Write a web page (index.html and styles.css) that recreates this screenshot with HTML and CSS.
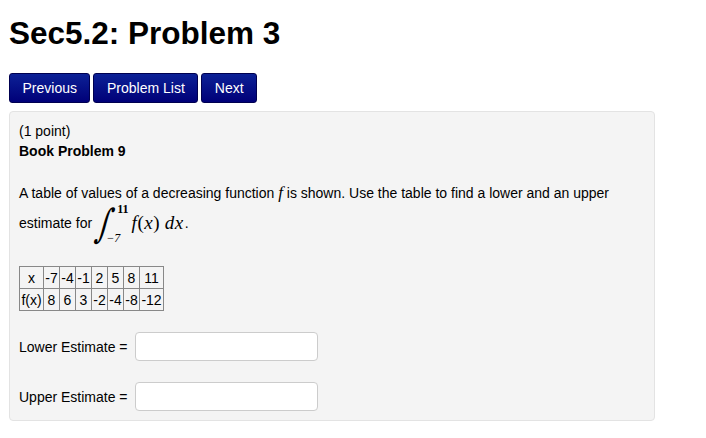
FILE: index.html
```
<!DOCTYPE html>
<html>
<head>
<title>Sec5.2: Problem 3</title>
<link rel="stylesheet" href="styles.css">
</head>
<body>
<div class="page">
    <h1 class="problem-title">Sec5.2: Problem 3</h1>

    <div class="nav-buttons">
        <button class="nav-button">Previous</button>
        <button class="nav-button">Problem List</button>
        <button class="nav-button">Next</button>
    </div>

    <div class="problem-box">
        <div class="points">(1 point)</div>
        <div class="book-problem">Book Problem 9</div>

        <div class="statement">
            A table of values of a decreasing function <span class="math-var">f</span> is shown. Use the table to find a lower and an upper
            <div class="estimate-line">
                <span>estimate for</span>
                <span class="integral">
                    <span class="int-sign">&int;</span>
                    <span class="int-limits">
                        <span class="int-upper">11</span>
                        <span class="int-lower">&minus;7</span>
                    </span>
                </span>
                <span class="math-expr"><i>f</i>(<i>x</i>)&thinsp;<i>dx</i></span><span class="math-dot">.</span>
            </div>
        </div>

        <table class="values-table">
            <tr>
                <td class="wide">x</td><td>-7</td><td>-4</td><td>-1</td><td>2</td><td>5</td><td>8</td><td class="wide">11</td>
            </tr>
            <tr>
                <td class="wide">f(x)</td><td>8</td><td>6</td><td>3</td><td>-2</td><td>-4</td><td>-8</td><td class="wide">-12</td>
            </tr>
        </table>

        <div class="answer-row">
            <label class="answer-label">Lower Estimate =</label>
            <input type="text" class="answer-input">
        </div>
        <div class="answer-row">
            <label class="answer-label">Upper Estimate =</label>
            <input type="text" class="answer-input">
        </div>
    </div>
</div>
</body>
</html>
```

FILE: styles.css
```
body {
    margin: 0;
    font-family: "Liberation Sans", Arial, sans-serif;
    font-size: 14px;
    color: #000;
    background: #fff;
}

.page {
    padding: 16px 0 0 9px;
}

.problem-title {
    margin: 0;
    font-size: 31.5px;
    line-height: 35px;
    font-weight: bold;
}

.nav-buttons {
    display: flex;
    gap: 3px;
    margin-top: 22px;
}

.nav-button {
    height: 30px;
    padding: 0 12.5px;
    border: 1px solid #000050;
    border-radius: 3px;
    background: linear-gradient(to bottom, #0c2196, #000078);
    color: #fff;
    font-family: "Liberation Sans", Arial, sans-serif;
    font-size: 14px;
    cursor: pointer;
}

.problem-box {
    width: 626px;
    margin-top: 8px;
    padding: 9px;
    background: #f4f4f4;
    border: 1px solid #e3e3e3;
    border-radius: 4px;
    line-height: 20px;
}

.book-problem {
    font-weight: bold;
}

.statement {
    margin-top: 22px;
}

.math-var {
    font-family: "Liberation Serif", "Times New Roman", serif;
    font-style: italic;
    font-size: 17px;
}

.estimate-line {
    display: flex;
    align-items: center;
    height: 44px;
    margin-top: -2px;
}

.integral {
    display: flex;
    height: 44px;
    margin-left: 6px;
}

.int-sign {
    display: flex;
    justify-content: center;
    width: 14px;
    font-family: "DejaVu Serif", serif;
    font-size: 29px;
    line-height: 44px;
    transform: skewX(-14deg) scale(0.95, 1.36);
}

.int-limits {
    display: flex;
    flex-direction: column;
    justify-content: space-between;
    font-family: "Liberation Serif", "Times New Roman", serif;
    font-size: 12px;
    line-height: 12px;
    padding: 2px 0 1px 0;
}

.int-upper {
    margin-left: 5px;
    font-weight: bold;
}

.int-lower {
    margin-left: -6px;
    font-style: italic;
}

.math-expr {
    margin-left: 3px;
    font-family: "Liberation Serif", "Times New Roman", serif;
    font-size: 19px;
    letter-spacing: 0.6px;
}

.math-dot {
    margin-left: 1px;
}

.values-table {
    margin-top: 21px;
    border-collapse: collapse;
    border: 1px solid #333;
}

.values-table td {
    width: 13px;
    height: 21px;
    padding: 0 1px;
    border: 1px solid #888;
    text-align: center;
    line-height: 20px;
}

.values-table td.wide {
    width: 21px;
}

.answer-row {
    display: flex;
    align-items: center;
    margin-top: 21px;
}

.answer-label {
    width: 116px;
}

.answer-input {
    width: 183px;
    height: 29px;
    box-sizing: border-box;
    border: 1px solid #ccc;
    border-radius: 4px;
    background: #fff;
}
```
